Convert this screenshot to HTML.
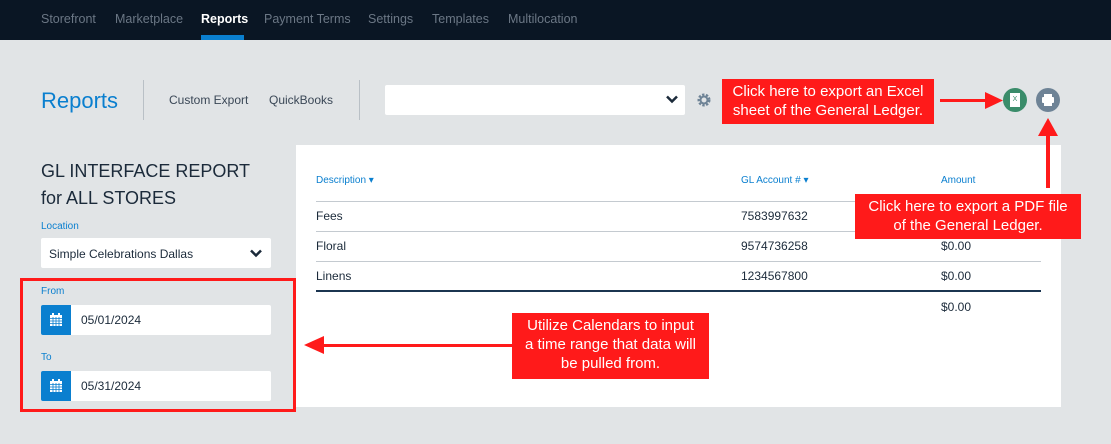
<!DOCTYPE html>
<html><head><meta charset="utf-8"><style>
*{margin:0;padding:0;box-sizing:border-box}
body{width:1111px;height:444px;background:#e1e4e6;font-family:"Liberation Sans",sans-serif;position:relative;overflow:hidden;color:#1b2a3a}
.a{position:absolute;white-space:nowrap}
.nav{position:absolute;left:0;top:0;width:1111px;height:40px;background:#0a1624}
.nav span{position:absolute;top:12px;font-size:12.5px;color:#6b7785}
.lbl{font-size:10px;color:#0a7fcf}
.box{position:absolute;background:#fff;border-radius:2px}
.red{position:absolute;background:#ff1a1a;color:#fff;font-size:15px;text-align:center;line-height:19px;white-space:nowrap}
.cal{position:absolute;width:30px;height:30px;background:#0a7fcf;border-radius:2px 0 0 2px}
.hd{font-size:10px;color:#0a7fcf}
.row{position:absolute;left:316px;width:725px;height:1px;background:#c4cad0}
.td{font-size:12px;position:absolute}
</style></head><body>
<div class="nav">
<span style="left:41px">Storefront</span><span style="left:115px">Marketplace</span>
<span style="left:201px;color:#fff;font-weight:bold">Reports</span>
<span style="left:264px">Payment Terms</span><span style="left:368px">Settings</span>
<span style="left:432px">Templates</span><span style="left:508px">Multilocation</span>
<div style="position:absolute;left:201px;top:35px;width:43px;height:5px;background:#0a7fcf"></div>
</div>
<div class="a" style="left:41px;top:88px;font-size:22px;color:#0a7fcf">Reports</div>
<div class="a" style="left:143px;top:80px;width:1px;height:40px;background:#b9c0c6"></div>
<div class="a" style="left:169px;top:93px;font-size:12px;color:#3a4756">Custom Export</div>
<div class="a" style="left:269px;top:93px;font-size:12px;color:#3a4756">QuickBooks</div>
<div class="a" style="left:359px;top:80px;width:1px;height:40px;background:#b9c0c6"></div>
<div class="box" style="left:385px;top:85px;width:300px;height:30px"></div>
<svg class="a" style="left:666px;top:95px" width="12" height="9" viewBox="0 0 12 9"><path d="M1 1.5l5 5 5-5" stroke="#1b2a3a" stroke-width="2.5" fill="none"/></svg>
<svg class="a" style="left:697px;top:93px" width="14" height="14" viewBox="0 0 14 14"><circle cx="7" cy="7" r="5" fill="none" stroke="#6e8396" stroke-width="3" stroke-dasharray="2.2 1.4"/><circle cx="7" cy="7" r="3.5" fill="none" stroke="#6e8396" stroke-width="2"/></svg>
<div class="red" style="left:722px;top:79px;width:212px;height:45px;padding-top:3px">Click here to export an Excel<br>sheet of the General Ledger.</div>
<div class="a" style="left:940px;top:99px;width:50px;height:3px;background:#ff1a1a"></div>
<svg class="a" style="left:985px;top:92px" width="18" height="17"><path d="M0 0L18 8.5L0 17z" fill="#ff1a1a"/></svg>
<div class="a" style="left:1003px;top:88px;width:24px;height:24px;border-radius:50%;background:#3a8c6a"></div>
<div class="a" style="left:1010px;top:93px;width:10px;height:14px;background:#fff;font-size:7px;color:#3a8c6a;text-align:center;line-height:14px">X</div>
<div class="a" style="left:1036px;top:88px;width:24px;height:24px;border-radius:50%;background:#6e8396"></div>
<div class="a" style="left:1042px;top:97px;width:12px;height:6px;background:#fff;border-radius:1px"></div>
<div class="a" style="left:1044px;top:94px;width:8px;height:3px;background:#fff"></div>
<div class="a" style="left:1044px;top:103px;width:8px;height:3px;background:#fff"></div>

<div class="a" style="left:41px;top:158px;font-size:18px;line-height:27px;color:#1b2a3a">GL INTERFACE REPORT<br>for ALL STORES</div>
<div class="a lbl" style="left:41px;top:221px">Location</div>
<div class="box" style="left:41px;top:238px;width:230px;height:30px"></div>
<div class="a" style="left:49px;top:247px;font-size:12px">Simple Celebrations Dallas</div>
<svg class="a" style="left:250px;top:249px" width="12" height="9" viewBox="0 0 12 9"><path d="M1 1.5l5 5 5-5" stroke="#1b2a3a" stroke-width="2.5" fill="none"/></svg>
<div class="a" style="left:20px;top:278px;width:276px;height:134px;border:3px solid #ff1a1a"></div>
<div class="a lbl" style="left:41px;top:286px">From</div>
<div class="box" style="left:41px;top:305px;width:230px;height:30px"></div>
<div class="cal" style="left:41px;top:305px"></div>
<div class="a" style="left:81px;top:313px;font-size:12px">05/01/2024</div>
<div class="a lbl" style="left:41px;top:352px">To</div>
<div class="box" style="left:41px;top:371px;width:230px;height:30px"></div>
<div class="cal" style="left:41px;top:371px"></div>
<div class="a" style="left:81px;top:379px;font-size:12px">05/31/2024</div>
<svg class="a" style="left:49px;top:312px" width="14" height="16"><rect x="1" y="3" width="12" height="11" fill="#fff"/><path d="M4 1v3M10 1v3" stroke="#fff" stroke-width="2"/><path d="M1 6.5h12M1 9h12M1 11.5h12M4 5v9M7 5v9M10 5v9" stroke="#0a7fcf" stroke-width=".8"/></svg>
<svg class="a" style="left:49px;top:378px" width="14" height="16"><rect x="1" y="3" width="12" height="11" fill="#fff"/><path d="M4 1v3M10 1v3" stroke="#fff" stroke-width="2"/><path d="M1 6.5h12M1 9h12M1 11.5h12M4 5v9M7 5v9M10 5v9" stroke="#0a7fcf" stroke-width=".8"/></svg>

<div class="box" style="left:296px;top:145px;width:765px;height:262px;border-radius:0"></div>
<div class="a hd" style="left:316px;top:175px">Description ▾</div>
<div class="a hd" style="left:741px;top:175px">GL Account # ▾</div>
<div class="a hd" style="left:941px;top:175px">Amount</div>
<div class="row" style="top:201px"></div>
<div class="row" style="top:231px"></div>
<div class="row" style="top:261px"></div>
<div class="row" style="top:290px;height:2px;background:#1b3550"></div>
<div class="a td" style="left:316px;top:209px">Fees</div><div class="a td" style="left:741px;top:209px">7583997632</div>
<div class="a td" style="left:316px;top:239px">Floral</div><div class="a td" style="left:741px;top:239px">9574736258</div><div class="a td" style="left:941px;top:239px">$0.00</div>
<div class="a td" style="left:316px;top:269px">Linens</div><div class="a td" style="left:741px;top:269px">1234567800</div><div class="a td" style="left:941px;top:269px">$0.00</div>
<div class="a td" style="left:941px;top:300px">$0.00</div>

<svg class="a" style="left:1038px;top:118px" width="20" height="18"><path d="M10 0L20 18H0z" fill="#ff1a1a"/></svg>
<div class="a" style="left:1046px;top:134px;width:4px;height:54px;background:#ff1a1a"></div>
<div class="red" style="left:855px;top:194px;width:226px;height:45px;padding-top:3px">Click here to export a PDF file<br>of the General Ledger.</div>
<div class="red" style="left:512px;top:313px;width:197px;height:66px;padding-top:3px">Utilize Calendars to input<br>a time range that data will<br>be pulled from.</div>
<svg class="a" style="left:304px;top:336px" width="20" height="18"><path d="M0 9L20 0V18z" fill="#ff1a1a"/></svg>
<div class="a" style="left:322px;top:344px;width:190px;height:3px;background:#ff1a1a"></div>
</body></html>
